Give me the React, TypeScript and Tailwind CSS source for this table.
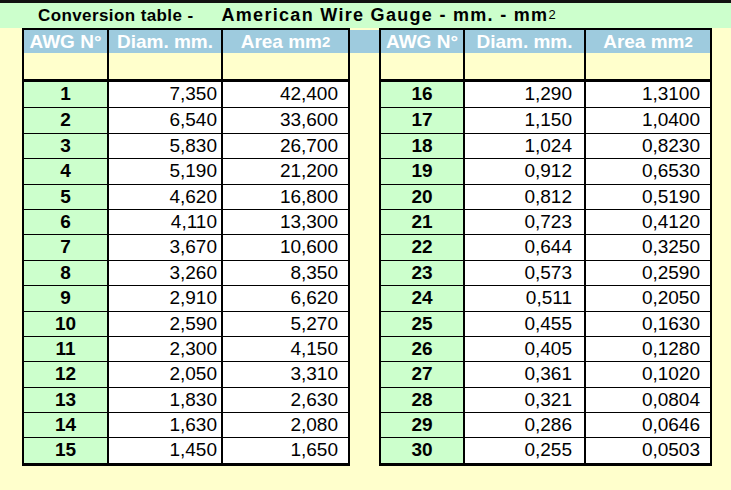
const left = [
  ['1', '7,350', '42,400'],
  ['2', '6,540', '33,600'],
  ['3', '5,830', '26,700'],
  ['4', '5,190', '21,200'],
  ['5', '4,620', '16,800'],
  ['6', '4,110', '13,300'],
  ['7', '3,670', '10,600'],
  ['8', '3,260', '8,350'],
  ['9', '2,910', '6,620'],
  ['10', '2,590', '5,270'],
  ['11', '2,300', '4,150'],
  ['12', '2,050', '3,310'],
  ['13', '1,830', '2,630'],
  ['14', '1,630', '2,080'],
  ['15', '1,450', '1,650'],
];

const right = [
  ['16', '1,290', '1,3100'],
  ['17', '1,150', '1,0400'],
  ['18', '1,024', '0,8230'],
  ['19', '0,912', '0,6530'],
  ['20', '0,812', '0,5190'],
  ['21', '0,723', '0,4120'],
  ['22', '0,644', '0,3250'],
  ['23', '0,573', '0,2590'],
  ['24', '0,511', '0,2050'],
  ['25', '0,455', '0,1630'],
  ['26', '0,405', '0,1280'],
  ['27', '0,361', '0,1020'],
  ['28', '0,321', '0,0804'],
  ['29', '0,286', '0,0646'],
  ['30', '0,255', '0,0503'],
];

interface TableProps {
  rows: string[][];
  widths: [string, string, string];
  pads: [string, string];
}

// column widths include the 2px right border (border-box)
function HeaderCell({ w, border, children }: { w: string; border: boolean; children: React.ReactNode }) {
  return (
    <div className={`${w} shrink-0 flex flex-col ${border ? 'border-r-2 border-black' : ''}`}>
      <div className="h-[23px] bg-[#9ecbde] text-white font-bold text-[19px] leading-[23px] text-center whitespace-nowrap">
        {children}
      </div>
      <div className="h-[26px] bg-[#ffffcc]"></div>
    </div>
  );
}

function WireTable({ rows, widths, pads }: TableProps) {
  return (
    <div className="shrink-0 border-2 border-b-[3px] border-black bg-white">
      {/* header */}
      <div className="flex border-b-[3px] border-black">
        <HeaderCell w={widths[0]} border>AWG N°</HeaderCell>
        <HeaderCell w={widths[1]} border>Diam. mm.</HeaderCell>
        <HeaderCell w={widths[2]} border={false}>
          Area mm<sup className="text-[15px] relative -top-[1px]">2</sup>
        </HeaderCell>
      </div>
      {rows.map((r, i) => (
        <div key={r[0]} className={`flex h-[25.4px] ${i > 0 ? 'border-t border-black' : ''}`}>
          <div className={`${widths[0]} shrink-0 border-r-2 border-black bg-[#ccffcc] font-bold text-[19px] text-center leading-[24px]`}>
            {r[0]}
          </div>
          <div className={`${widths[1]} shrink-0 border-r-2 border-black text-[19px] text-right leading-[24px] ${pads[0]}`}>
            {r[1]}
          </div>
          <div className={`${widths[2]} shrink-0 text-[19px] text-right leading-[24px] ${pads[1]}`}>{r[2]}</div>
        </div>
      ))}
    </div>
  );
}

export default function App() {
  return (
    <div
      className="w-[731px] h-[490px] bg-[#ffffcc] border-t-[3px] border-[#111] overflow-hidden text-black"
      style={{ fontFamily: '"Liberation Sans", Arial, sans-serif' }}
    >
      {/* title band */}
      <div className="h-[25px] bg-[#ccffcc] pl-[38px] flex items-center font-bold whitespace-pre">
        <span className="text-[17px] tracking-[0.4px]">Conversion table -</span>
        <span className="ml-[28px] text-[18px] tracking-[1.3px]">
          American Wire Gauge - mm. - mm<sup className="font-normal text-[13px] relative -top-[2px]">2</sup>
        </span>
      </div>

      {/* the two tables */}
      <div className="flex pl-[22px]">
        <WireTable rows={left} widths={['w-[85px]', 'w-[114px]', 'w-[125px]']} pads={['pr-[4px]', 'pr-[10px]']} />
        <div className="w-[29px] shrink-0 pt-[2px]">
          <div className="h-[23px] bg-[#9ecbde]"></div>
        </div>
        <WireTable rows={right} widths={['w-[84px]', 'w-[121px]', 'w-[124px]']} pads={['pr-[12px]', 'pr-[10px]']} />
      </div>
    </div>
  );
}
